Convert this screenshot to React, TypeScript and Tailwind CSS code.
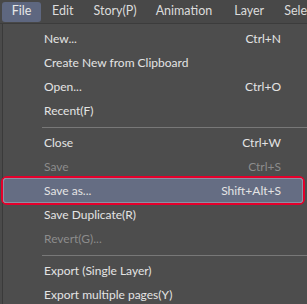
type Item =
  | { sep: true }
  | { label: string; shortcut?: string; disabled?: boolean; active?: boolean; sep?: false }

const items: Item[] = [
  { label: 'New...', shortcut: 'Ctrl+N' },
  { label: 'Create New from Clipboard' },
  { label: 'Open...', shortcut: 'Ctrl+O' },
  { label: 'Recent(F)' },
  { sep: true },
  { label: 'Close', shortcut: 'Ctrl+W' },
  { label: 'Save', shortcut: 'Ctrl+S', disabled: true },
  { label: 'Save as...', shortcut: 'Shift+Alt+S', active: true },
  { label: 'Save Duplicate(R)' },
  { label: 'Revert(G)...', disabled: true },
  { sep: true },
  { label: 'Export (Single Layer)' },
  { label: 'Export multiple pages(Y)' },
]

function MenuRow({ item }: { item: Item }) {
  if (item.sep) {
    return (
      <div className="h-[8px] flex items-center pl-[39px]">
        <div className="h-px w-full bg-[#787878]" />
      </div>
    )
  }
  return (
    <div className="relative h-[24px]">
      {item.active && (
        <>
          <div className="absolute left-[-2px] right-[2px] top-[-3px] bottom-[-2px] rounded-[6px] border-2 border-[#e5002b] bg-white" />
          <div className="absolute left-0 right-[4px] top-[-1px] bottom-0 rounded-[3px] border border-[#8a91a3] bg-[#656d83]" />
        </>
      )}
      <div
        className={
          'relative h-full flex items-center justify-between pl-[41px] pr-[26px] ' +
          (item.disabled ? 'text-[#8c8c8c]' : 'text-[#e4e4e4]')
        }
      >
        <span>{item.label}</span>
        {item.shortcut && <span>{item.shortcut}</span>}
      </div>
    </div>
  )
}

export default function App() {
  return (
    <div
      className="w-[307px] h-[304px] overflow-hidden bg-[#4d4d4d] text-[12px]"
      style={{ fontFamily: 'Lato, "Noto Sans", sans-serif' }}
    >
      <div className="h-[24px] bg-[#484848] border-b border-[#3c3c3c] flex items-center pl-[2px] whitespace-nowrap text-[#dcdcdc] text-[12.5px] overflow-hidden">
        <div className="shrink-0 h-[20px] w-[39px] rounded-[3px] bg-[#5e6780] flex items-center justify-center text-[#e8e8e8]">
          File
        </div>
        <span className="shrink-0 ml-[11px]">Edit</span>
        <span className="shrink-0 ml-[20px]">Story(P)</span>
        <span className="shrink-0 ml-[19px]">Animation</span>
        <span className="shrink-0 ml-[22px]">Layer</span>
        <span className="shrink-0 ml-[20px]">Select</span>
      </div>
      <div className="flex">
        <div className="w-[3px] border-r border-[#3a3a3a] bg-[#4a4a4a]" />
        <div className="flex-1 pt-[3px]">
          {items.map((it, i) => (
            <MenuRow key={i} item={it} />
          ))}
        </div>
      </div>
    </div>
  )
}
